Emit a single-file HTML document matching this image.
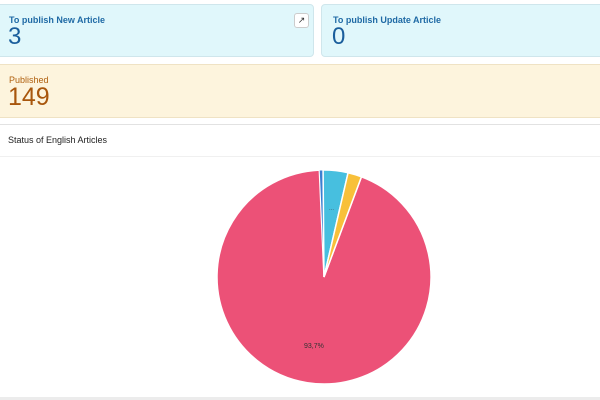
<!DOCTYPE html>
<html><head><style>
body{margin:0;width:600px;height:400px;overflow:hidden;background:#fff;font-family:"Liberation Sans",sans-serif;position:relative}
.card{position:absolute;box-sizing:border-box;border-radius:4px}
.lbl{position:absolute;left:8px;top:10px;font-size:9px;font-weight:bold}
.num{position:absolute;left:7px;top:20px;font-size:24px;line-height:24px}
</style></head><body>
<div class="card" style="left:-4px;top:4px;width:318px;height:53px;background:#e0f7fb;border:1px solid #cfe6ec">
 <div class="lbl" style="left:12px;color:#1f6aa5">To publish New Article</div>
 <div class="num" style="left:11px;color:#1a5e9c">3</div>
 <div style="position:absolute;left:297px;top:8px;width:15px;height:15px;background:#fff;border:1px solid #ccc;border-radius:3px;box-sizing:border-box;font-size:9px;text-align:center;line-height:13px;color:#333">↗</div>
</div>
<div class="card" style="left:321px;top:4px;width:290px;height:53px;background:#e0f7fb;border:1px solid #cfe6ec">
 <div class="lbl" style="left:11px;color:#1f6aa5">To publish Update Article</div>
 <div class="num" style="left:10px;color:#1a5e9c">0</div>
</div>
<div class="card" style="left:-4px;top:64px;width:610px;height:54px;background:#fdf4dd;border:1px solid #efe2c4;border-radius:0">
 <div class="lbl" style="left:12px;top:10px;color:#b0600f;font-weight:normal">Published</div>
 <div class="num" style="left:11px;top:20px;color:#a8560c;font-size:25px">149</div>
</div>
<div style="position:absolute;left:0;top:124px;width:600px;height:1px;background:#e2e2e2"></div>
<div style="position:absolute;left:8px;top:135px;font-size:9px;color:#222">Status of English Articles</div>
<div style="position:absolute;left:0;top:156px;width:600px;height:1px;background:#f0f0f0"></div>
<svg style="position:absolute;left:0;top:0" width="600" height="400">
 <path d="M324 277 L361.47 176.77 A107 107 0 1 1 319.33 170.10 Z" fill="#ec5177" stroke="#fff" stroke-width="1.5"/>
 <path d="M324 277 L319.33 170.10 A107 107 0 0 1 323.07 170 Z" fill="#3b7fd0" stroke="#fff" stroke-width="0.8"/>
 <path d="M324 277 L323.07 170 A107 107 0 0 1 348.07 172.74 Z" fill="#47bfdf" stroke="#fff" stroke-width="1.5"/>
 <path d="M324 277 L348.07 172.74 A107 107 0 0 1 361.47 176.77 Z" fill="#f8c03a" stroke="#fff" stroke-width="1.5"/>
 <text x="304" y="348" font-size="7" fill="#333" font-family="Liberation Sans,sans-serif">93,7%</text>
 <text x="329" y="210" font-size="6" fill="#456">...</text>
</svg>
<div style="position:absolute;left:0;top:397px;width:600px;height:3px;background:#ececec"></div>
</body></html>
